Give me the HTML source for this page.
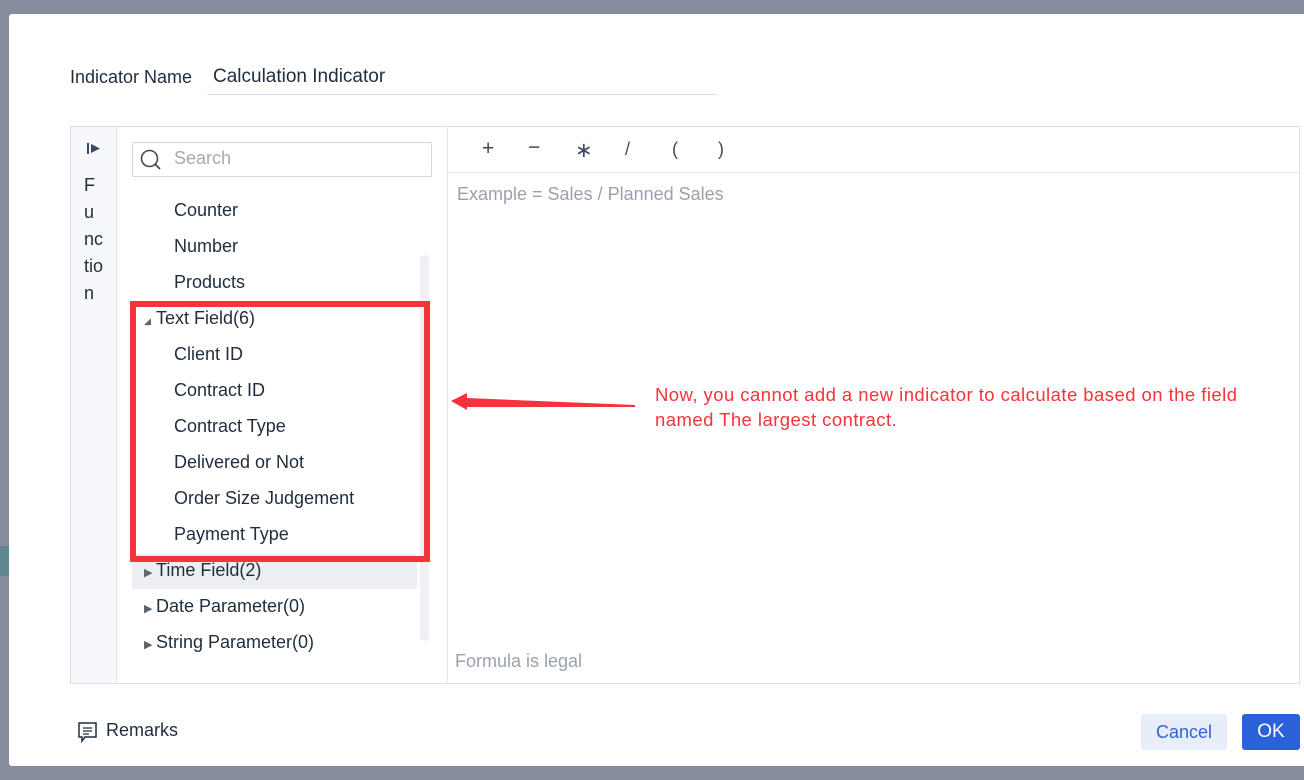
<!DOCTYPE html>
<html><head><meta charset="utf-8"><style>
*{margin:0;padding:0;box-sizing:border-box}
body{width:1304px;height:780px;overflow:hidden;background:#858c9c;font-family:"Liberation Sans",sans-serif;position:relative;color:#1f2d3d}
.modal{position:absolute;left:9px;top:14px;width:1300px;height:752px;background:#fff;border-radius:3px}
.abs{position:absolute}
.t{font-size:18px;color:#1f2d3d;white-space:nowrap}
.tri{display:inline-block;width:12px;font-size:11px;color:#5a6472}
</style></head><body>
<div class="abs" style="left:0;top:0;width:9px;height:780px;background:#858c9c"></div>
<div class="abs" style="left:0;top:546px;width:9px;height:30px;background:#5f8590"></div>
<div class="modal"></div>
<div class="abs t" style="left:70px;top:67px">Indicator Name</div>
<div class="abs" style="left:207px;top:60px;width:510px;height:35px;border-bottom:1px solid #dcdfe6"></div>
<div class="abs t" style="left:213px;top:66px;font-size:19px">Calculation Indicator</div>

<div class="abs" style="left:70px;top:126px;width:1230px;height:558px;border:1px solid #dcdfe6"></div>
<div class="abs" style="left:71px;top:127px;width:46px;height:556px;background:#f7f8fc;border-right:1px solid #e4e6ec"></div>
<svg class="abs" style="left:86px;top:141px" width="16" height="16"><rect x="1" y="2" width="2" height="11" fill="#3d4a5c"/><path d="M5 3 L14 7.5 L5 12Z" fill="#3d4a5c"/></svg>
<div class="abs t" style="left:84px;top:172px;line-height:27px;white-space:normal;width:24px">F<br>u<br>nc<br>tio<br>n</div>

<div class="abs" style="left:447px;top:127px;width:1px;height:556px;background:#e4e6ec"></div>
<div class="abs" style="left:132px;top:142px;width:300px;height:35px;border:1px solid #d5d8e0;border-radius:2px"></div>
<svg class="abs" style="left:139px;top:148px" width="24" height="24"><circle cx="10.5" cy="10.5" r="8" fill="none" stroke="#3d4a5c" stroke-width="1.6"/><line x1="16.5" y1="16.5" x2="21" y2="21" stroke="#3d4a5c" stroke-width="1.8"/></svg>
<div class="abs t" style="left:174px;top:148px;color:#a3aab5">Search</div>

<div class="abs" style="left:420px;top:255px;width:9px;height:386px;background:#eef0f4;border-radius:5px"></div>
<div class="abs" style="left:132px;top:554px;width:285px;height:35px;background:#edeef2;border-radius:3px"></div>

<div class="abs t" style="left:174px;top:200px">Counter</div>
<div class="abs t" style="left:174px;top:236px">Number</div>
<div class="abs t" style="left:174px;top:272px">Products</div>
<div class="abs t" style="left:144px;top:308px"><span class="tri" style="font-size:9px">◢</span>Text Field(6)</div>
<div class="abs t" style="left:174px;top:344px">Client ID</div>
<div class="abs t" style="left:174px;top:380px">Contract ID</div>
<div class="abs t" style="left:174px;top:416px">Contract Type</div>
<div class="abs t" style="left:174px;top:452px">Delivered or Not</div>
<div class="abs t" style="left:174px;top:488px">Order Size Judgement</div>
<div class="abs t" style="left:174px;top:524px">Payment Type</div>
<div class="abs t" style="left:144px;top:560px"><span class="tri">▶</span>Time Field(2)</div>
<div class="abs t" style="left:144px;top:596px"><span class="tri">▶</span>Date Parameter(0)</div>
<div class="abs t" style="left:144px;top:632px"><span class="tri">▶</span>String Parameter(0)</div>

<div class="abs" style="left:130px;top:301px;width:300px;height:261px;border:6px solid #f5333a"></div>

<div class="abs" style="left:448px;top:172px;width:851px;height:1px;background:#e4e6ec"></div>
<div class="abs t" style="left:482px;top:137px;font-size:21px;color:#3d4a5c">+</div>
<div class="abs t" style="left:528px;top:136px;font-size:21px;color:#3d4a5c">−</div>
<div class="abs t" style="left:575px;top:138px;font-size:21px;color:#3d4a5c">∗</div>
<div class="abs t" style="left:625px;top:139px;color:#3d4a5c">/</div>
<div class="abs t" style="left:672px;top:139px;color:#3d4a5c">(</div>
<div class="abs t" style="left:718px;top:139px;color:#3d4a5c">)</div>
<div class="abs t" style="left:457px;top:184px;color:#9aa1ad">Example = Sales / Planned Sales</div>
<div class="abs t" style="left:455px;top:651px;color:#9aa1ad">Formula is legal</div>

<svg class="abs" style="left:445px;top:390px" width="200" height="24"><path d="M6 11 L22 3 L22 8 L190 15 L190 17 L22 17 L22 20 Z" fill="#f5333a"/></svg>
<div class="abs t" style="left:655px;top:382px;color:#f5333a;line-height:25px;font-size:18.5px;letter-spacing:0.45px">Now, you cannot add a new indicator to calculate based on the field<br>named The largest contract.</div>

<svg class="abs" style="left:77px;top:721px" width="22" height="22"><path d="M2 2 H19 V16 H8 L5 20 V16 H2 Z" fill="none" stroke="#1f2d3d" stroke-width="1.5"/><path d="M6 7 H15 M6 10 H15 M6 13 H12" stroke="#1f2d3d" stroke-width="1.3"/></svg>
<div class="abs t" style="left:106px;top:720px">Remarks</div>

<div class="abs" style="left:1141px;top:714px;width:86px;height:36px;background:#e8eef9;border-radius:3px;color:#2f64d8;font-size:18px;text-align:center;line-height:36px">Cancel</div>
<div class="abs" style="left:1242px;top:714px;width:58px;height:36px;background:#2b62da;border-radius:3px;color:#fff;font-size:19px;text-align:center;line-height:36px">OK</div>
</body></html>
